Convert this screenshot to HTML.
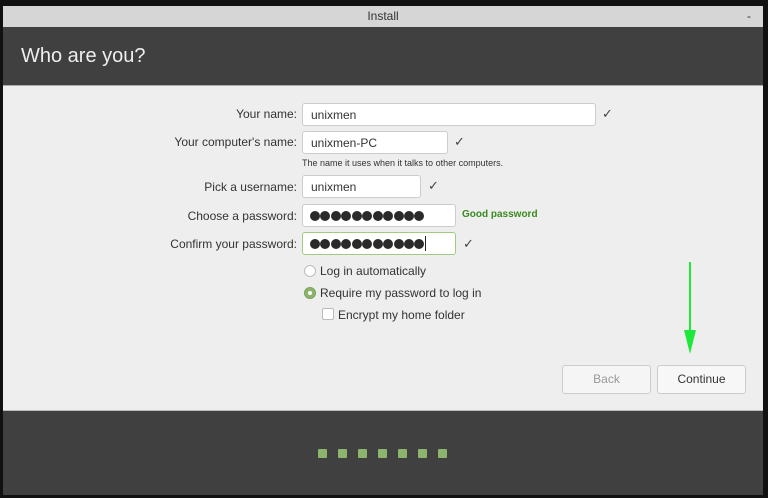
<!DOCTYPE html>
<html><head><meta charset="utf-8"><style>
*{margin:0;padding:0;box-sizing:border-box}
body{width:768px;height:498px;background:#111;font-family:"Liberation Sans","DejaVu Sans",sans-serif;position:relative;overflow:hidden}
.win{position:absolute;left:3px;top:6px;width:760px;height:489px;background:#404040}
.tb{position:absolute;left:0;top:0;width:760px;height:21px;background:#d6d6d6;text-align:center;font-size:12px;line-height:21px;color:#333}
.tb .min{position:absolute;right:12px;top:0;font-size:12px}
.hd{position:absolute;left:0;top:21px;width:760px;height:58px;background:#404040;color:#eee;font-size:20px;padding:18px 0 0 18px}
.ct{position:absolute;left:0;top:79px;width:760px;height:326px;background:#eeeeee;border-top:1px solid #aaa;border-bottom:1px solid #bbb}
.a{position:absolute;font-size:12px;color:#333}
.lbl{text-align:right;width:200px;left:97px}
.in{position:absolute;height:23px;background:#fff;border:1px solid #ccc;border-radius:3px;font-size:12px;color:#333;padding:4px 8px;line-height:14px}
.ck{position:absolute;font-size:13px;color:#444}
.dots{display:flex;align-items:center;padding:0 0 0 7px}
.dots i{display:block;width:10px;height:10px;border-radius:50%;background:#2a2a2a;margin-right:0.45px}
.dots b{display:block;width:1px;height:15px;background:#222}
.btn{position:absolute;height:29px;border:1px solid #ccc;border-radius:3px;background:#f5f5f5;font-size:12px;text-align:center;line-height:27px}
.d{position:absolute;top:443px;width:9px;height:9px;background:#8db46c;border-radius:1px}
</style></head><body>
<div class="win">
<div class="tb">Install<span class="min">-</span></div>
<div class="hd">Who are you?</div>
<div class="ct"></div>
</div>
<div class="a lbl" style="top:107px">Your name:</div>
<div class="in" style="left:302px;top:103px;width:294px">unixmen</div>
<div class="ck" style="left:602px;top:106px">✓</div>
<div class="a lbl" style="top:135px">Your computer's name:</div>
<div class="in" style="left:302px;top:131px;width:146px">unixmen-PC</div>
<div class="ck" style="left:454px;top:134px">✓</div>
<div class="a" style="left:302px;top:158px;font-size:9px">The name it uses when it talks to other computers.</div>
<div class="a lbl" style="top:180px">Pick a username:</div>
<div class="in" style="left:302px;top:175px;width:119px">unixmen</div>
<div class="ck" style="left:428px;top:178px">✓</div>
<div class="a lbl" style="top:209px">Choose a password:</div>
<div class="in dots" style="left:302px;top:204px;width:154px"><i></i><i></i><i></i><i></i><i></i><i></i><i></i><i></i><i></i><i></i><i></i></div>
<div class="a" style="left:462px;top:209px;font-size:10px;font-weight:bold;color:#3a8a1e">Good password</div>
<div class="a lbl" style="top:237px">Confirm your password:</div>
<div class="in dots" style="left:302px;top:232px;width:154px;border-color:#9fcb80"><i></i><i></i><i></i><i></i><i></i><i></i><i></i><i></i><i></i><i></i><i></i><b></b></div>
<div class="ck" style="left:463px;top:236px">✓</div>
<div style="position:absolute;left:304px;top:265px;width:12px;height:12px;border-radius:50%;background:#fff;border:1px solid #bbb"></div>
<div class="a" style="left:320px;top:264px">Log in automatically</div>
<div style="position:absolute;left:304px;top:287px;width:12px;height:12px;border-radius:50%;background:#8db46c;border:1px solid #7aa35a"><div style="position:absolute;left:3px;top:3px;width:4px;height:4px;border-radius:50%;background:#fff"></div></div>
<div class="a" style="left:320px;top:286px">Require my password to log in</div>
<div style="position:absolute;left:322px;top:308px;width:12px;height:12px;border-radius:2px;background:#fff;border:1px solid #bbb"></div>
<div class="a" style="left:338px;top:308px">Encrypt my home folder</div>
<svg style="position:absolute;left:682px;top:262px" width="16" height="92"><line x1="8" y1="0" x2="8" y2="75" stroke="#1ee83a" stroke-width="2"/><polygon points="2,68 14,68 8,92" fill="#1ee83a"/></svg>
<div class="btn" style="left:562px;top:365px;width:89px;color:#999">Back</div>
<div class="btn" style="left:657px;top:365px;width:89px;color:#333;background:#f7f7f7">Continue</div>
<div class="d" style="left:318px;top:449px"></div><div class="d" style="left:338px;top:449px"></div><div class="d" style="left:358px;top:449px"></div><div class="d" style="left:378px;top:449px"></div><div class="d" style="left:398px;top:449px"></div><div class="d" style="left:418px;top:449px"></div><div class="d" style="left:438px;top:449px"></div>
</body></html>
